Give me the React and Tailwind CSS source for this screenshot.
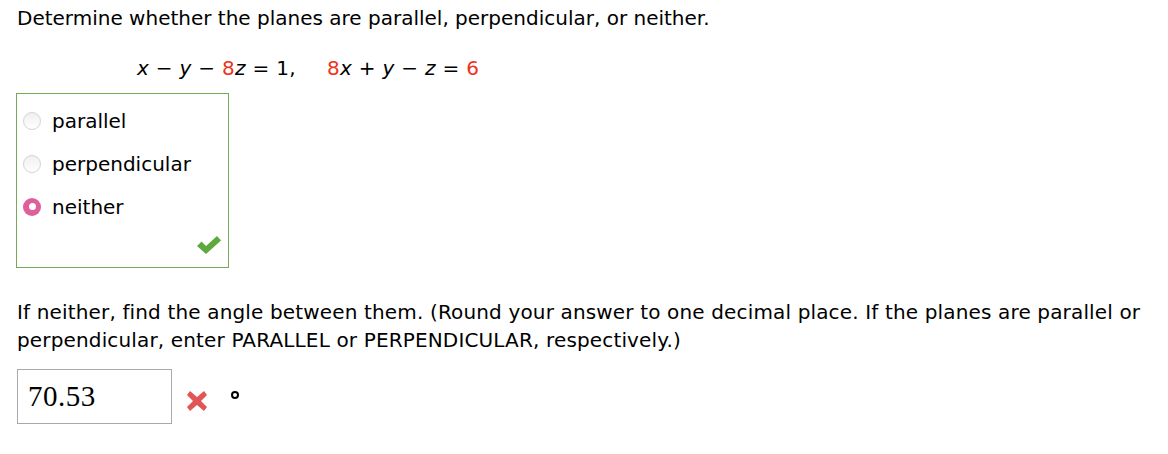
export default function App() {
  const options = ['parallel', 'perpendicular', 'neither'];
  const selected = 'neither';

  return (
    <div className="bg-white min-h-screen pl-[17px] pt-[5px] text-black text-[20px]" style={{ fontFamily: '"DejaVu Sans", Verdana, sans-serif' }}>
      <p className="leading-[26px]">Determine whether the planes are parallel, perpendicular, or neither.</p>

      <p className="leading-[26px] mt-[24px] pl-[120px] tracking-[0.3px]">
        <i>x</i> − <i>y</i> − <span className="text-[#ee3322]">8</span><i>z</i> = 1,
        <span className="ml-[31px] text-[#ee3322]">8</span><i>x</i> + <i>y</i> − <i>z</i> = <span className="text-[#ee3322]">6</span>
      </p>

      <div className="mt-[12px] w-[213px] h-[175px] border border-[#77aa55] -ml-[1px] relative pt-[5px]">
        {options.map(opt => (
          <label key={opt} className="flex items-center h-[43px]">
            <span className={
              opt === selected
                ? 'ml-[6px] w-[18px] h-[18px] rounded-full bg-[#de5f9b] flex items-center justify-center'
                : 'ml-[6px] w-[18px] h-[18px] rounded-full border border-[#d4d4d4] bg-gradient-to-b from-[#f0f0f0] to-white'
            }>
              {opt === selected && <span className="w-[7px] h-[7px] rounded-full bg-white" />}
            </span>
            <span className="ml-[11px]">{opt}</span>
          </label>
        ))}
        <svg className="absolute right-[6px] bottom-[12px]" width="26" height="20" viewBox="0 0 26 20">
          <path d="M1 11 L5.5 6.5 L10 11 L21 1 L25 5.5 L10 19 Z" fill="#5ea83c" />
        </svg>
      </div>

      <p className="leading-[28px] mt-[30px] pr-[10px] tracking-[0.15px]">
        If neither, find the angle between them. (Round your answer to one decimal place. If the planes are parallel or perpendicular, enter PARALLEL or PERPENDICULAR, respectively.)
      </p>

      <div className="flex items-center mt-[15px]">
        <div className="w-[155px] h-[55px] border border-[#aaaaaa] flex items-center pl-[10px] text-[29px] tracking-[0.5px]" style={{ fontFamily: '"Liberation Serif", "Times New Roman", serif' }}>
          70.53
        </div>
        <svg className="ml-[14px] mt-[9px]" width="22" height="22" viewBox="0 0 22 22">
          <path d="M4 1 L11 7 L18 1 L21 5 L15 11 L21 17 L18 21 L11 15 L4 21 L1 17 L7 11 L1 5 Z" fill="#e05555" />
        </svg>
        <span className="ml-[23px] -mt-[3px] w-[8px] h-[8px] rounded-full border-2 border-black" />
      </div>
    </div>
  );
}
